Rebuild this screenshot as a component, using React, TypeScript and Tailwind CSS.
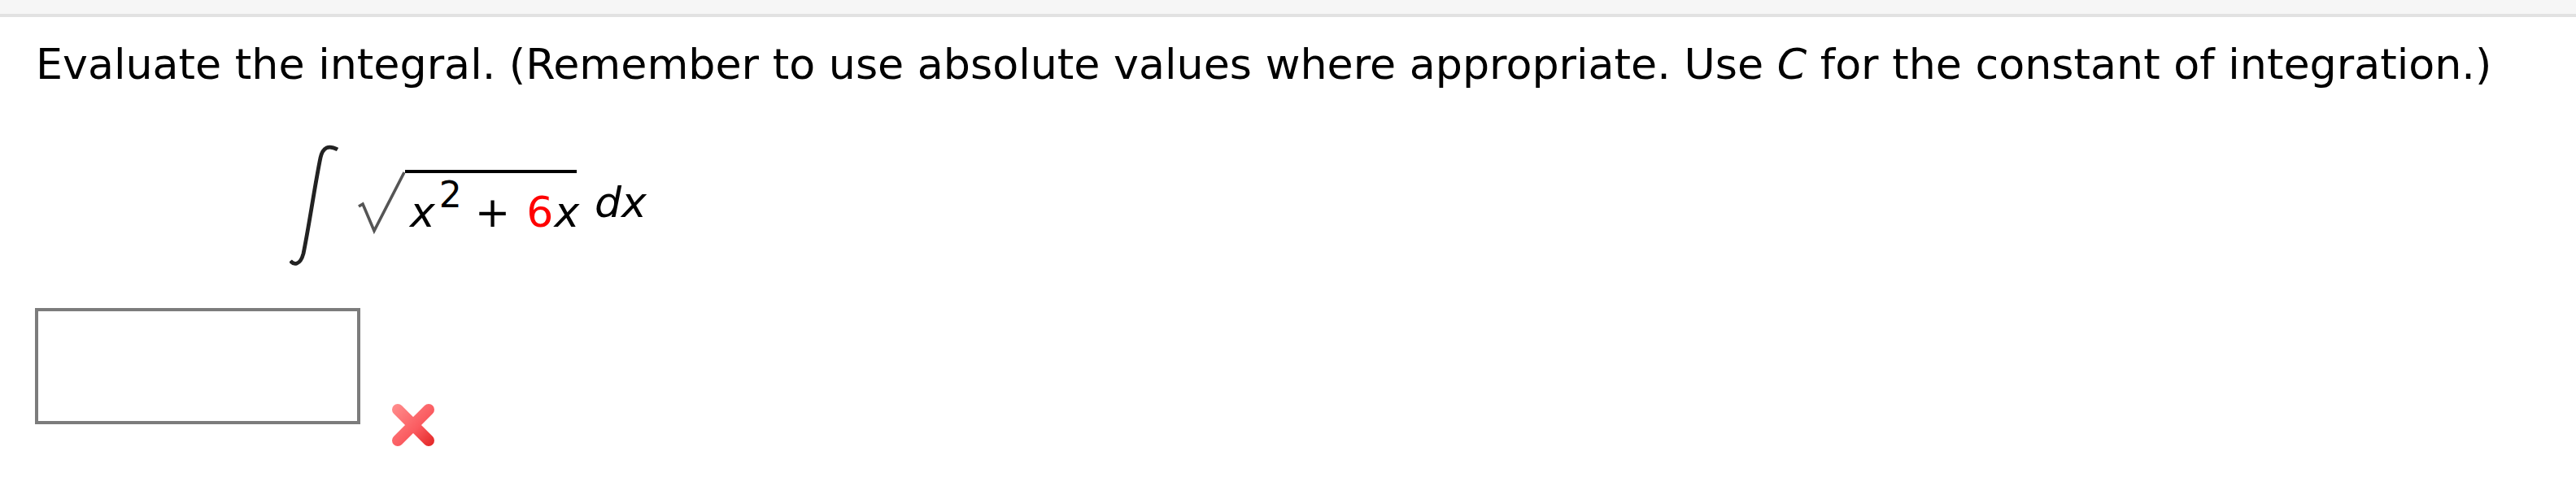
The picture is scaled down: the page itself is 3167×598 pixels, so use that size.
function IntegralSign() {
  return (
    <svg width="60" height="150" viewBox="0 0 60 150" className="shrink-0">
      <path d="M1 143 C5 148 13 149 17 134 C24 100 31 50 38 16 C41 3 48 0 59 6" fill="none" stroke="#222" strokeWidth="4.8" />
    </svg>
  )
}

function RadicalSign() {
  return (
    <svg width="58" height="80" viewBox="0 0 58 80" className="shrink-0">
      <path d="M1 45 L6 42 L20 75 L57 3" fill="none" stroke="#555" strokeWidth="3.6" />
    </svg>
  )
}

function FailIcon() {
  return (
    <svg width="54" height="54" viewBox="0 0 54 54" className="shrink-0">
      <defs>
        <linearGradient id="cross" gradientUnits="userSpaceOnUse" x1="4" y1="4" x2="50" y2="50">
          <stop offset="0" stopColor="#ff8a8a" />
          <stop offset="0.6" stopColor="#fa5a5f" />
          <stop offset="1" stopColor="#e52b2b" />
        </linearGradient>
      </defs>
      <path d="M8 8 L46 46 M46 8 L8 46" fill="none" stroke="url(#cross)" strokeWidth="14" strokeLinecap="round" />
    </svg>
  )
}

export default function App() {
  return (
    <div className="h-[598px] bg-white text-black overflow-hidden font-['DejaVu_Sans',Verdana,sans-serif]">
      <div className="h-[21px] bg-[#f6f6f6] border-b-4 border-[#e2e2e2]" />

      <p className="pl-[44px] pt-[28px] text-[52.25px] leading-[60px] whitespace-nowrap">
        Evaluate the integral. (Remember to use absolute values where appropriate. Use <i>C</i> for the constant of integration.)
      </p>

      <div className="flex items-start pl-[356px] pt-[69px]">
        <IntegralSign />
        <div className="ml-[24px] mt-[31px]">
          <RadicalSign />
        </div>
        <div className="mt-[31px] h-[90px] w-[211px] border-t-4 border-black pl-[6px] pt-[5px] whitespace-nowrap text-[52px] leading-[60px]">
          <i>x</i>
          <span className="text-[44px] leading-none align-[24px] ml-[5px]">2</span>
          <span className="ml-[16px]">+</span>
          <span className="ml-[20px] text-[#ff0000]">6</span>
          <i className="ml-[1px]">x</i>
        </div>
        <i className="ml-[22px] mt-[41px] text-[52px] leading-[60px]">dx</i>
      </div>

      <div className="flex items-start pl-[43px] pt-[51px]">
        <input
          type="text"
          className="w-[400px] h-[143px] border-4 border-[#7c7c7c] bg-white"
        />
        <div className="ml-[38px] mt-[117px]">
          <FailIcon />
        </div>
      </div>
    </div>
  )
}
